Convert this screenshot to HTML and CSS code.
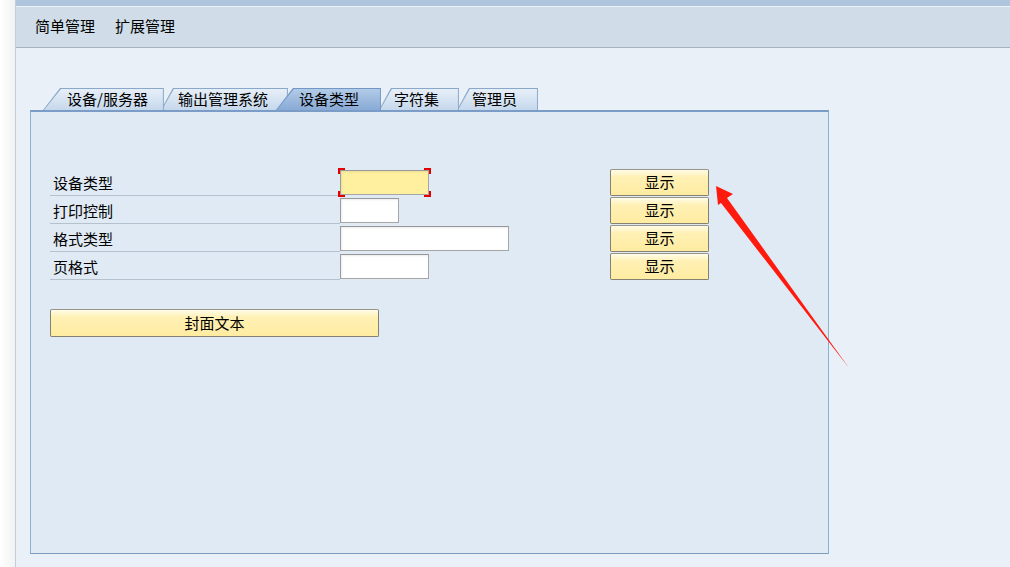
FILE: index.html
```html
<!DOCTYPE html>
<html lang="zh-CN">
<head>
<meta charset="utf-8">
<title>设备类型</title>
<link rel="stylesheet" href="styles.css">
</head>
<body>
<div class="app">
  <div class="edge"></div>
  <div class="main">
    <div class="topline"></div>
    <div class="menubar">
      <span class="menu-item">简单管理</span>
      <span class="menu-item">扩展管理</span>
    </div>
    <div class="content">
      <div class="tabs">
        <div class="tab t1"><span class="tab-label">设备/服务器</span></div>
        <div class="tab t2"><span class="tab-label">输出管理系统</span></div>
        <div class="tab t3 active"><span class="tab-label">设备类型</span></div>
        <div class="tab t4"><span class="tab-label">字符集</span></div>
        <div class="tab t5"><span class="tab-label">管理员</span></div>
      </div>
      <div class="panel">
        <div class="form">
          <div class="label">设备类型</div>
          <div class="field"><span class="focus-wrap"><input class="inp w89 required" type="text"><span class="focus"><i class="c tl"></i><i class="c tr"></i><i class="c bl"></i><i class="c br"></i></span></span></div>
          <div class="act"><button class="btn">显示</button></div>

          <div class="label">打印控制</div>
          <div class="field"><input class="inp w59" type="text"></div>
          <div class="act"><button class="btn">显示</button></div>

          <div class="label">格式类型</div>
          <div class="field"><input class="inp w169" type="text"></div>
          <div class="act"><button class="btn">显示</button></div>

          <div class="label">页格式</div>
          <div class="field"><input class="inp w89" type="text"></div>
          <div class="act"><button class="btn">显示</button></div>
        </div>
        <button class="btn wide">封面文本</button>
      </div>
    </div>
  </div>
</div>
<svg class="arrow" width="1010" height="567" viewBox="0 0 1010 567">
  <polygon points="716,186 733,194 727,198 849,368 721,203 718,205" fill="#ff1a0e"/>
</svg>
</body>
</html>
```
FILE: styles.css
```css
* { box-sizing: border-box; }
html, body { margin: 0; padding: 0; }
body {
  width: 1010px;
  height: 567px;
  overflow: hidden;
  position: relative;
  font-family: "Noto Sans CJK SC", "Noto Sans", sans-serif;
  font-size: 15px;
  color: #000;
  background: #e9f0f7;
}
.app { display: flex; height: 567px; }
.edge {
  width: 16px;
  flex: none;
  background: linear-gradient(to right, #ffffff, #f1f2f3);
  border-right: 1px solid #c5ced8;
}
.main { flex: 1; display: flex; flex-direction: column; background: #e9f0f7; }
.topline {
  height: 7px;
  background: #aec5dd;
  border-bottom: 1px solid #eef3f8;
}
.menubar {
  height: 41px;
  background: #d0dde8;
  border-bottom: 1px solid #a6b3c0;
  display: flex;
  align-items: center;
  gap: 20px;
  padding-left: 19px;
  padding-bottom: 4px;
}
.menu-item { line-height: 1; }
.content { padding: 40px 0 0 14px; }

/* tabs */
.tabs { display: flex; height: 22px; margin-left: 13px; }
.tab {
  --s: 12px;
  position: relative;
  height: 22px;
  display: flex;
  align-items: center;
  background: #8aa8ca;
  clip-path: polygon(var(--s) 0, 100% 0, 100% 100%, 0 100%);
  isolation: isolate;
}
.tab::before {
  content: "";
  position: absolute;
  top: 1px; left: 1px; right: 1px; bottom: 0;
  background: linear-gradient(#e7eff8, #c6d8ec);
  clip-path: polygon(var(--s) 0, 100% 0, 100% 100%, 0 100%);
  z-index: -1;
}
.tab-label { position: relative; line-height: 1; padding-bottom: 1px; }
.t1 { --s: 17px; padding: 0 16px 0 24px; z-index: 4; }
.t2 { padding: 0 20px 0 17px; margin-left: -3px; z-index: 3; }
.t3 { --s: 17px; padding: 0 22px 0 23px; margin-left: -12px; z-index: 6; }
.t4 { padding: 0 20px 0 15px; margin-left: -2px; z-index: 2; }
.t5 { padding: 0 21px 0 15px; margin-left: -2px; z-index: 1; }
.tab.active { background: #7397c4; }
.tab.active::before { background: linear-gradient(#b2cbe8, #88aad5); }

/* panel */
.panel {
  width: 799px;
  height: 444px;
  background: #dfeaf4;
  border: 1px solid #8eaed0;
  border-top: 2px solid #7a9cc6;
  border-bottom-color: #7d9dbd;
  padding: 56px 0 0 19px;
}
.form {
  display: grid;
  grid-template-columns: 290px 270px 99px;
  grid-auto-rows: 28px;
}
.label {
  border-bottom: 1px solid #b5c1cd;
  display: flex;
  align-items: center;
  padding: 1px 0 0 3px;
  line-height: 1;
}
.field { padding-top: 2px; }
.focus-wrap { position: relative; display: inline-block; vertical-align: top; }
.inp {
  display: block;
  height: 25px;
  border: 1px solid #a6a6a6;
  border-top-color: #989898;
  border-left-color: #9c9c9c;
  background: #fff;
  box-shadow: inset 1px 1px 2px rgba(0,0,0,0.08);
  margin: 0;
  padding: 0 3px;
  font: inherit;
  outline: none;
}
.inp.required { background: #fff0a0; }
.w59 { width: 59px; }
.w89 { width: 89px; }
.w169 { width: 169px; }
.focus { position: absolute; inset: -2px; pointer-events: none; }
.c { position: absolute; width: 7px; height: 6px; border: 0 solid #e20000; }
.tl { top: 0; left: 0; border-top-width: 2px; border-left-width: 2px; }
.tr { top: 0; right: 0; border-top-width: 2px; border-right-width: 2px; }
.bl { bottom: 0; left: 0; border-bottom-width: 2px; border-left-width: 2px; }
.br { bottom: 0; right: 0; border-bottom-width: 2px; border-right-width: 2px; }

.act { padding-top: 1px; }
.btn {
  display: block;
  width: 99px;
  height: 27px;
  margin: 0;
  padding: 0 0 2px 0;
  border: 1px solid #85806f;
  border-top-color: #9a9586;
  border-radius: 2px;
  background: linear-gradient(#fffcea 0%, #fff1b4 28%, #ffeca2 100%);
  font: inherit;
  color: #000;
  line-height: 1;
}
.btn.wide { width: 329px; height: 28px; margin-top: 29px; }

.arrow { position: absolute; top: 0; left: 0; pointer-events: none; }
```
